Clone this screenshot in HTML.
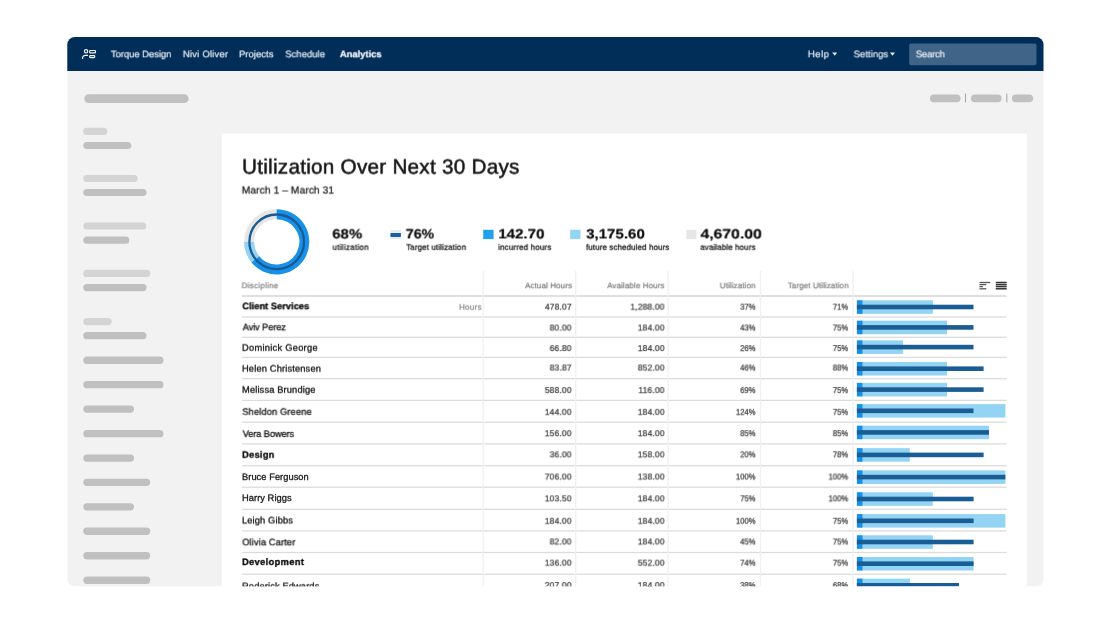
<!DOCTYPE html>
<html lang="en"><head><meta charset="utf-8"><title>Utilization Over Next 30 Days</title>
<style>
html,body{margin:0;padding:0;background:#fff}
body{width:1110px;height:625px;position:relative;overflow:hidden;font-family:"Liberation Sans", sans-serif}
#in{position:absolute;left:0;top:0;width:1110px;height:625px;overflow:hidden}
#in svg{position:absolute;left:0;top:0}
#cover{z-index:5}
.t{position:absolute;white-space:nowrap;line-height:1;font-family:"Liberation Sans", sans-serif;text-rendering:geometricPrecision;transform-origin:0 0}
</style></head><body>
<div id="in">
<svg width="1110" height="625" viewBox="0 0 1110 625">
<defs><clipPath id="fc"><rect x="67.3" y="37.1" width="976.20" height="549.30" rx="7.5"/></clipPath></defs>
<g clip-path="url(#fc)">
<rect x="60.00" y="30.00" width="1000.00" height="570.00" fill="#f2f2f2"/>
<rect x="60.00" y="30.00" width="1000.00" height="41.00" fill="#002e59"/>
<rect x="909.20" y="43.50" width="127.30" height="21.70" fill="#406487" rx="2"/>
<path d="M832.2 52.5h5.0l-2.5 3.2z" fill="#e3e9f0"/>
<path d="M890.0 52.5h5.0l-2.5 3.2z" fill="#e3e9f0"/>
<g fill="none" stroke="#f4f6f9" stroke-width="1.15"><circle cx="86.05" cy="51.35" r="1.65"/><path d="M82.55 59.1 v-1.1 a2.7 2.7 0 0 1 2.7 -2.7 h2.75"/><rect x="89.65" y="50.45" width="5.85" height="2.4" rx="0.7"/><rect x="89.65" y="55.6" width="5.1" height="1.95" rx="0.7"/></g>
<rect x="84.30" y="94.20" width="104.30" height="8.80" fill="#c0c0c0" rx="4.4"/>
<rect x="83.30" y="127.80" width="24.00" height="7.20" fill="#d4d4d4" rx="3.6"/>
<rect x="83.30" y="141.90" width="48.00" height="7.20" fill="#c0c0c0" rx="3.6"/>
<rect x="83.30" y="174.90" width="54.30" height="7.20" fill="#d4d4d4" rx="3.6"/>
<rect x="83.30" y="188.90" width="63.20" height="7.20" fill="#c0c0c0" rx="3.6"/>
<rect x="83.30" y="222.40" width="63.00" height="7.20" fill="#d4d4d4" rx="3.6"/>
<rect x="83.30" y="236.60" width="46.00" height="7.20" fill="#c0c0c0" rx="3.6"/>
<rect x="83.30" y="269.80" width="67.00" height="7.20" fill="#d4d4d4" rx="3.6"/>
<rect x="83.30" y="284.00" width="63.20" height="7.20" fill="#c0c0c0" rx="3.6"/>
<rect x="83.30" y="318.00" width="28.40" height="7.20" fill="#d4d4d4" rx="3.6"/>
<rect x="83.30" y="332.10" width="63.20" height="7.20" fill="#c0c0c0" rx="3.6"/>
<rect x="83.30" y="356.60" width="80.20" height="7.30" fill="#c0c0c0" rx="3.65"/>
<rect x="83.30" y="381.00" width="80.20" height="7.30" fill="#c0c0c0" rx="3.65"/>
<rect x="83.30" y="405.40" width="50.70" height="7.30" fill="#c0c0c0" rx="3.65"/>
<rect x="83.30" y="430.00" width="80.20" height="7.30" fill="#c0c0c0" rx="3.65"/>
<rect x="83.30" y="454.40" width="50.70" height="7.30" fill="#c0c0c0" rx="3.65"/>
<rect x="83.30" y="478.70" width="66.90" height="7.30" fill="#c0c0c0" rx="3.65"/>
<rect x="83.30" y="503.20" width="50.70" height="7.30" fill="#c0c0c0" rx="3.65"/>
<rect x="83.30" y="527.60" width="66.90" height="7.30" fill="#c0c0c0" rx="3.65"/>
<rect x="83.30" y="552.10" width="66.90" height="7.30" fill="#c0c0c0" rx="3.65"/>
<rect x="83.30" y="576.60" width="66.90" height="7.30" fill="#c0c0c0" rx="3.65"/>
<rect x="930.00" y="94.60" width="30.50" height="7.60" fill="#c0c0c0" rx="3.8"/>
<rect x="971.00" y="94.60" width="30.60" height="7.60" fill="#c0c0c0" rx="3.8"/>
<rect x="1011.90" y="94.60" width="21.20" height="7.60" fill="#c0c0c0" rx="3.8"/>
<rect x="965.00" y="93.60" width="1.00" height="8.80" fill="#a4a4a4"/>
<rect x="1006.30" y="93.60" width="1.00" height="8.80" fill="#a4a4a4"/>
<rect x="221.75" y="133.60" width="805.25" height="460.00" fill="#ffffff"/>
<path d="M249.10 241.80A27.6 27.6 0 0 1 276.70 214.20" fill="none" stroke="#e6e6e6" stroke-width="10.0"/>
<path d="M255.37 259.32A27.6 27.6 0 0 1 249.10 241.80" fill="none" stroke="#93d3f3" stroke-width="10.0"/>
<path d="M276.70 214.20A27.6 27.6 0 1 1 255.37 259.32" fill="none" stroke="#1791e8" stroke-width="10.0"/>
<circle cx="276.7" cy="241.8" r="27.3" fill="none" stroke="#185a91" stroke-width="2.3"/>
<rect x="390.40" y="229.90" width="10.55" height="9.10" fill="#ebebeb"/>
<rect x="390.40" y="233.00" width="10.55" height="3.95" fill="#1960a0" rx="0.8"/>
<rect x="483.20" y="229.80" width="10.40" height="9.30" fill="#22a0ec"/>
<rect x="570.20" y="229.80" width="10.30" height="9.30" fill="#93d3f3"/>
<rect x="686.30" y="229.80" width="10.20" height="9.30" fill="#e6e6e6"/>
<rect x="242.00" y="294.90" width="764.60" height="2.20" fill="#e0e0e0"/>
<rect x="242.00" y="316.35" width="764.60" height="1.30" fill="#dcdcdc"/>
<rect x="242.00" y="336.65" width="764.60" height="1.30" fill="#dcdcdc"/>
<rect x="242.00" y="356.75" width="764.60" height="1.30" fill="#dcdcdc"/>
<rect x="242.00" y="378.05" width="764.60" height="1.30" fill="#dcdcdc"/>
<rect x="242.00" y="399.75" width="764.60" height="1.30" fill="#dcdcdc"/>
<rect x="242.00" y="421.55" width="764.60" height="1.30" fill="#dcdcdc"/>
<rect x="242.00" y="443.25" width="764.60" height="1.30" fill="#dcdcdc"/>
<rect x="242.00" y="465.05" width="764.60" height="1.30" fill="#dcdcdc"/>
<rect x="242.00" y="486.55" width="764.60" height="1.30" fill="#dcdcdc"/>
<rect x="242.00" y="508.65" width="764.60" height="1.30" fill="#dcdcdc"/>
<rect x="242.00" y="530.25" width="764.60" height="1.30" fill="#dcdcdc"/>
<rect x="242.00" y="551.85" width="764.60" height="1.30" fill="#dcdcdc"/>
<rect x="242.00" y="573.55" width="764.60" height="1.30" fill="#dcdcdc"/>
<rect x="482.55" y="271.00" width="1.30" height="330.00" fill="#f0f0f0"/>
<rect x="575.05" y="271.00" width="1.30" height="330.00" fill="#f0f0f0"/>
<rect x="667.45" y="271.00" width="1.30" height="330.00" fill="#f0f0f0"/>
<rect x="759.85" y="271.00" width="1.30" height="330.00" fill="#f0f0f0"/>
<rect x="852.40" y="271.00" width="1.30" height="330.00" fill="#f0f0f0"/>
<rect x="979.50" y="281.85" width="10.70" height="1.30" fill="#5a5a5a"/>
<rect x="979.50" y="283.95" width="6.80" height="1.30" fill="#5a5a5a"/>
<rect x="979.50" y="285.95" width="3.40" height="1.30" fill="#5a5a5a"/>
<rect x="979.50" y="288.15" width="6.80" height="1.30" fill="#5a5a5a"/>
<rect x="995.80" y="281.75" width="10.90" height="1.50" fill="#333"/>
<rect x="995.80" y="283.85" width="10.90" height="1.50" fill="#333"/>
<rect x="995.80" y="285.85" width="10.90" height="1.50" fill="#333"/>
<rect x="995.80" y="288.05" width="10.90" height="1.50" fill="#333"/>
<rect x="856.90" y="300.30" width="76.00" height="13.50" fill="#93d3f3"/>
<rect x="856.90" y="300.30" width="5.60" height="13.50" fill="#1791e8"/>
<rect x="856.90" y="304.70" width="116.60" height="4.60" fill="#1a5c94"/>
<rect x="856.90" y="320.70" width="90.10" height="13.50" fill="#93d3f3"/>
<rect x="856.90" y="320.70" width="5.60" height="13.50" fill="#1791e8"/>
<rect x="856.90" y="325.10" width="116.60" height="4.60" fill="#1a5c94"/>
<rect x="856.90" y="340.40" width="46.00" height="13.50" fill="#93d3f3"/>
<rect x="856.90" y="340.40" width="5.60" height="13.50" fill="#1791e8"/>
<rect x="856.90" y="344.80" width="116.60" height="4.60" fill="#1a5c94"/>
<rect x="856.90" y="362.00" width="90.10" height="13.50" fill="#93d3f3"/>
<rect x="856.90" y="362.00" width="5.60" height="13.50" fill="#1791e8"/>
<rect x="856.90" y="366.40" width="126.70" height="4.60" fill="#1a5c94"/>
<rect x="856.90" y="382.90" width="90.10" height="13.50" fill="#93d3f3"/>
<rect x="856.90" y="382.90" width="5.60" height="13.50" fill="#1791e8"/>
<rect x="856.90" y="387.30" width="126.70" height="4.60" fill="#1a5c94"/>
<rect x="856.90" y="404.10" width="148.50" height="13.50" fill="#93d3f3"/>
<rect x="856.90" y="404.10" width="5.60" height="13.50" fill="#1791e8"/>
<rect x="856.90" y="408.50" width="116.60" height="4.60" fill="#1a5c94"/>
<rect x="856.90" y="425.70" width="132.10" height="13.50" fill="#93d3f3"/>
<rect x="856.90" y="425.70" width="5.60" height="13.50" fill="#1791e8"/>
<rect x="856.90" y="430.10" width="132.10" height="4.60" fill="#1a5c94"/>
<rect x="856.90" y="448.20" width="52.90" height="13.50" fill="#93d3f3"/>
<rect x="856.90" y="448.20" width="5.60" height="13.50" fill="#1791e8"/>
<rect x="856.90" y="452.60" width="126.70" height="4.60" fill="#1a5c94"/>
<rect x="856.90" y="470.40" width="148.50" height="13.50" fill="#93d3f3"/>
<rect x="856.90" y="470.40" width="5.60" height="13.50" fill="#1791e8"/>
<rect x="856.90" y="474.80" width="148.50" height="4.60" fill="#1a5c94"/>
<rect x="856.90" y="492.30" width="75.90" height="13.50" fill="#93d3f3"/>
<rect x="856.90" y="492.30" width="5.60" height="13.50" fill="#1791e8"/>
<rect x="856.90" y="496.70" width="116.70" height="4.60" fill="#1a5c94"/>
<rect x="856.90" y="514.10" width="148.50" height="13.50" fill="#93d3f3"/>
<rect x="856.90" y="514.10" width="5.60" height="13.50" fill="#1791e8"/>
<rect x="856.90" y="518.50" width="116.70" height="4.60" fill="#1a5c94"/>
<rect x="856.90" y="535.30" width="75.90" height="13.50" fill="#93d3f3"/>
<rect x="856.90" y="535.30" width="5.60" height="13.50" fill="#1791e8"/>
<rect x="856.90" y="539.70" width="116.70" height="4.60" fill="#1a5c94"/>
<rect x="856.90" y="557.00" width="116.70" height="13.50" fill="#93d3f3"/>
<rect x="856.90" y="557.00" width="5.60" height="13.50" fill="#1791e8"/>
<rect x="856.90" y="561.40" width="116.70" height="4.60" fill="#1a5c94"/>
<rect x="856.90" y="578.60" width="53.00" height="13.50" fill="#93d3f3"/>
<rect x="856.90" y="578.60" width="5.60" height="13.50" fill="#1791e8"/>
<rect x="856.90" y="583.00" width="102.10" height="4.60" fill="#1a5c94"/>
</g>
</svg>
<nav>
<span class="t" style="left:110px;top:50px;font-size:9.5px;letter-spacing:-0.053px;-webkit-text-stroke:0.2px #e8edf3;color:#e8edf3;transform:translate(0.79px,0.30px) rotateX(0.01deg)">Torque Design</span>
<span class="t" style="left:182px;top:50px;font-size:9.5px;letter-spacing:0.186px;-webkit-text-stroke:0.2px #e8edf3;color:#e8edf3;transform:translate(0.82px,0.30px) rotateX(0.01deg)">Nivi Oliver</span>
<span class="t" style="left:239px;top:50px;font-size:9.5px;letter-spacing:0.013px;-webkit-text-stroke:0.2px #e8edf3;color:#e8edf3;transform:translate(0.02px,0.30px) rotateX(0.01deg)">Projects</span>
<span class="t" style="left:285px;top:50px;font-size:9.5px;letter-spacing:0.018px;-webkit-text-stroke:0.2px #e8edf3;color:#e8edf3;transform:translate(0.27px,0.30px) rotateX(0.01deg)">Schedule</span>
<span class="t" style="left:339px;top:50px;font-size:9.5px;font-weight:700;letter-spacing:-0.053px;-webkit-text-stroke:0.2px #ffffff;color:#ffffff;transform:translate(0.76px,0.30px) rotateX(0.01deg)">Analytics</span>
<span class="t" style="left:807px;top:50px;font-size:9.5px;letter-spacing:0.510px;-webkit-text-stroke:0.2px #e8edf3;color:#e8edf3;transform:translate(0.82px,0.30px) rotateX(0.01deg)">Help</span>
<span class="t" style="left:853px;top:50px;font-size:9.5px;letter-spacing:0.035px;-webkit-text-stroke:0.2px #e8edf3;color:#e8edf3;transform:translate(0.57px,0.30px) rotateX(0.01deg)">Settings</span>
<span class="t" style="left:915px;top:50px;font-size:9.5px;letter-spacing:-0.232px;-webkit-text-stroke:0.2px #e6ecf3;color:#e6ecf3;transform:translate(0.77px,0.30px) rotateX(0.01deg)">Search</span>
</nav>
<main>
<header>
<span class="t" style="left:242px;top:157px;font-size:20.6px;letter-spacing:0.299px;-webkit-text-stroke:0.5px #141414;color:#141414;transform:translate(0.01px,0.60px) rotateX(0.01deg)">Utilization Over Next 30 Days</span>
<span class="t" style="left:241px;top:186px;font-size:10.2px;letter-spacing:0.097px;-webkit-text-stroke:0.25px #1c1c1c;color:#1c1c1c;transform:translate(0.76px,0.45px) rotateX(0.01deg)">March 1 – March 31</span>
</header>
<section id="summary">
<span class="t" style="left:332px;top:227px;font-size:13.4px;font-weight:700;-webkit-text-stroke:0.2px #0a0a0a;color:#0a0a0a;transform:translate(0.36px,0.40px) rotateX(0.01deg) scaleX(1.1090)">68%</span>
<span class="t" style="left:332px;top:243px;font-size:7.9px;letter-spacing:0.332px;-webkit-text-stroke:0.3px #1a1a1a;color:#1a1a1a;transform:translate(0.49px,0.80px) rotateX(0.01deg)">utilization</span>
<span class="t" style="left:405px;top:227px;font-size:13.4px;font-weight:700;-webkit-text-stroke:0.2px #0a0a0a;color:#0a0a0a;transform:translate(0.79px,0.40px) rotateX(0.01deg) scaleX(1.0586)">76%</span>
<span class="t" style="left:406px;top:243px;font-size:7.9px;letter-spacing:0.162px;-webkit-text-stroke:0.3px #1a1a1a;color:#1a1a1a;transform:translate(0.22px,0.80px) rotateX(0.01deg)">Target utilization</span>
<span class="t" style="left:498px;top:227px;font-size:13.4px;font-weight:700;-webkit-text-stroke:0.2px #0a0a0a;color:#0a0a0a;transform:translate(0.25px,0.40px) rotateX(0.01deg) scaleX(1.1295)">142.70</span>
<span class="t" style="left:498px;top:243px;font-size:7.9px;letter-spacing:0.205px;-webkit-text-stroke:0.3px #1a1a1a;color:#1a1a1a;transform:translate(0.17px,0.80px) rotateX(0.01deg)">incurred hours</span>
<span class="t" style="left:586px;top:227px;font-size:13.4px;font-weight:700;-webkit-text-stroke:0.2px #0a0a0a;color:#0a0a0a;transform:translate(0.05px,0.40px) rotateX(0.01deg) scaleX(1.1274)">3,175.60</span>
<span class="t" style="left:586px;top:243px;font-size:7.9px;letter-spacing:0.139px;-webkit-text-stroke:0.3px #1a1a1a;color:#1a1a1a;transform:translate(0.09px,0.80px) rotateX(0.01deg)">future scheduled hours</span>
<span class="t" style="left:700px;top:227px;font-size:13.4px;font-weight:700;-webkit-text-stroke:0.2px #0a0a0a;color:#0a0a0a;transform:translate(0.46px,0.40px) rotateX(0.01deg) scaleX(1.1777)">4,670.00</span>
<span class="t" style="left:700px;top:243px;font-size:7.9px;letter-spacing:0.146px;-webkit-text-stroke:0.3px #1a1a1a;color:#1a1a1a;transform:translate(0.36px,0.80px) rotateX(0.01deg)">available hours</span>
</section>
<section id="disciplines">
<span class="t" style="left:241px;top:282px;font-size:8.0px;letter-spacing:0.275px;-webkit-text-stroke:0.2px #7a7a7a;color:#7a7a7a;transform:translate(0.54px,0.20px) rotateX(0.01deg)">Discipline</span>
<span class="t" style="left:525px;top:282px;font-size:8.0px;letter-spacing:0.100px;-webkit-text-stroke:0.2px #7a7a7a;color:#7a7a7a;transform:translate(0.09px,0.20px) rotateX(0.01deg)">Actual Hours</span>
<span class="t" style="left:607px;top:282px;font-size:8.0px;letter-spacing:0.100px;-webkit-text-stroke:0.2px #7a7a7a;color:#7a7a7a;transform:translate(0.20px,0.20px) rotateX(0.01deg)">Available Hours</span>
<span class="t" style="left:719px;top:282px;font-size:8.0px;letter-spacing:0.100px;-webkit-text-stroke:0.2px #7a7a7a;color:#7a7a7a;transform:translate(0.73px,0.20px) rotateX(0.01deg)">Utilization</span>
<span class="t" style="left:787px;top:282px;font-size:8.0px;letter-spacing:0.100px;-webkit-text-stroke:0.2px #7a7a7a;color:#7a7a7a;transform:translate(0.68px,0.20px) rotateX(0.01deg)">Target Utilization</span>
<span class="t" style="left:459px;top:303px;font-size:8.2px;letter-spacing:0.181px;-webkit-text-stroke:0.2px #8a8a8a;color:#8a8a8a;transform:translate(0.03px,0.80px) rotateX(0.01deg)">Hours</span>
<span class="t" style="left:242px;top:302px;font-size:9.3px;font-weight:700;letter-spacing:0.021px;-webkit-text-stroke:0.3px #050505;color:#050505;transform:translate(0.32px,0.20px) rotateX(0.01deg)">Client Services</span>
<span class="t" style="left:544px;top:302px;font-size:8.4px;letter-spacing:0.200px;-webkit-text-stroke:0.25px #3a3a3a;color:#3a3a3a;transform:translate(0.90px,0.60px) rotateX(0.01deg)">478.07</span>
<span class="t" style="left:630px;top:302px;font-size:8.4px;letter-spacing:0.200px;-webkit-text-stroke:0.25px #3a3a3a;color:#3a3a3a;transform:translate(0.42px,0.60px) rotateX(0.01deg)">1,288.00</span>
<span class="t" style="left:740px;top:302px;font-size:8.4px;letter-spacing:0.050px;-webkit-text-stroke:0.25px #3c3c3c;color:#3c3c3c;transform:translate(0.12px,0.60px) rotateX(0.01deg) scaleX(0.9100)">37%</span>
<span class="t" style="left:832px;top:302px;font-size:8.4px;letter-spacing:0.050px;-webkit-text-stroke:0.25px #3c3c3c;color:#3c3c3c;transform:translate(0.72px,0.60px) rotateX(0.01deg) scaleX(0.9100)">71%</span>
<span class="t" style="left:242px;top:323px;font-size:9.3px;letter-spacing:-0.132px;-webkit-text-stroke:0.3px #161616;color:#161616;transform:translate(0.68px,0.20px) rotateX(0.01deg)">Aviv Perez</span>
<span class="t" style="left:549px;top:323px;font-size:8.4px;letter-spacing:0.200px;-webkit-text-stroke:0.25px #3a3a3a;color:#3a3a3a;transform:translate(0.66px,0.45px) rotateX(0.01deg)">80.00</span>
<span class="t" style="left:637px;top:323px;font-size:8.4px;letter-spacing:0.200px;-webkit-text-stroke:0.25px #3a3a3a;color:#3a3a3a;transform:translate(0.80px,0.45px) rotateX(0.01deg)">184.00</span>
<span class="t" style="left:740px;top:323px;font-size:8.4px;letter-spacing:0.050px;-webkit-text-stroke:0.25px #3c3c3c;color:#3c3c3c;transform:translate(0.12px,0.45px) rotateX(0.01deg) scaleX(0.9100)">43%</span>
<span class="t" style="left:832px;top:323px;font-size:8.4px;letter-spacing:0.050px;-webkit-text-stroke:0.25px #3c3c3c;color:#3c3c3c;transform:translate(0.72px,0.45px) rotateX(0.01deg) scaleX(0.9100)">75%</span>
<span class="t" style="left:241px;top:343px;font-size:9.3px;letter-spacing:0.268px;-webkit-text-stroke:0.3px #161616;color:#161616;transform:translate(0.94px,0.70px) rotateX(0.01deg)">Dominick George</span>
<span class="t" style="left:549px;top:343px;font-size:8.4px;letter-spacing:0.200px;-webkit-text-stroke:0.25px #3a3a3a;color:#3a3a3a;transform:translate(0.66px,0.95px) rotateX(0.01deg)">66.80</span>
<span class="t" style="left:637px;top:343px;font-size:8.4px;letter-spacing:0.200px;-webkit-text-stroke:0.25px #3a3a3a;color:#3a3a3a;transform:translate(0.80px,0.95px) rotateX(0.01deg)">184.00</span>
<span class="t" style="left:740px;top:343px;font-size:8.4px;letter-spacing:0.050px;-webkit-text-stroke:0.25px #3c3c3c;color:#3c3c3c;transform:translate(0.12px,0.95px) rotateX(0.01deg) scaleX(0.9100)">26%</span>
<span class="t" style="left:832px;top:343px;font-size:8.4px;letter-spacing:0.050px;-webkit-text-stroke:0.25px #3c3c3c;color:#3c3c3c;transform:translate(0.72px,0.95px) rotateX(0.01deg) scaleX(0.9100)">75%</span>
<span class="t" style="left:241px;top:364px;font-size:9.3px;letter-spacing:0.149px;-webkit-text-stroke:0.3px #161616;color:#161616;transform:translate(0.94px,0.60px) rotateX(0.01deg)">Helen Christensen</span>
<span class="t" style="left:549px;top:363px;font-size:8.4px;letter-spacing:0.200px;-webkit-text-stroke:0.25px #3a3a3a;color:#3a3a3a;transform:translate(0.75px,0.50px) rotateX(0.01deg)">83.87</span>
<span class="t" style="left:637px;top:363px;font-size:8.4px;letter-spacing:0.200px;-webkit-text-stroke:0.25px #3a3a3a;color:#3a3a3a;transform:translate(0.80px,0.50px) rotateX(0.01deg)">852.00</span>
<span class="t" style="left:740px;top:363px;font-size:8.4px;letter-spacing:0.050px;-webkit-text-stroke:0.25px #3c3c3c;color:#3c3c3c;transform:translate(0.12px,0.50px) rotateX(0.01deg) scaleX(0.9100)">46%</span>
<span class="t" style="left:832px;top:363px;font-size:8.4px;letter-spacing:0.050px;-webkit-text-stroke:0.25px #3c3c3c;color:#3c3c3c;transform:translate(0.72px,0.50px) rotateX(0.01deg) scaleX(0.9100)">88%</span>
<span class="t" style="left:241px;top:385px;font-size:9.3px;letter-spacing:0.138px;-webkit-text-stroke:0.3px #161616;color:#161616;transform:translate(0.94px,0.70px) rotateX(0.01deg)">Melissa Brundige</span>
<span class="t" style="left:544px;top:385px;font-size:8.4px;letter-spacing:0.200px;-webkit-text-stroke:0.25px #3a3a3a;color:#3a3a3a;transform:translate(0.80px,0.90px) rotateX(0.01deg)">588.00</span>
<span class="t" style="left:638px;top:385px;font-size:8.4px;letter-spacing:0.200px;-webkit-text-stroke:0.25px #3a3a3a;color:#3a3a3a;transform:translate(0.43px,0.90px) rotateX(0.01deg)">116.00</span>
<span class="t" style="left:740px;top:385px;font-size:8.4px;letter-spacing:0.050px;-webkit-text-stroke:0.25px #3c3c3c;color:#3c3c3c;transform:translate(0.12px,0.90px) rotateX(0.01deg) scaleX(0.9100)">69%</span>
<span class="t" style="left:832px;top:385px;font-size:8.4px;letter-spacing:0.050px;-webkit-text-stroke:0.25px #3c3c3c;color:#3c3c3c;transform:translate(0.72px,0.90px) rotateX(0.01deg) scaleX(0.9100)">75%</span>
<span class="t" style="left:242px;top:407px;font-size:9.3px;letter-spacing:0.132px;-webkit-text-stroke:0.3px #161616;color:#161616;transform:translate(0.28px,0.80px) rotateX(0.01deg)">Sheldon Greene</span>
<span class="t" style="left:544px;top:407px;font-size:8.4px;letter-spacing:0.200px;-webkit-text-stroke:0.25px #3a3a3a;color:#3a3a3a;transform:translate(0.80px,0.80px) rotateX(0.01deg)">144.00</span>
<span class="t" style="left:637px;top:407px;font-size:8.4px;letter-spacing:0.200px;-webkit-text-stroke:0.25px #3a3a3a;color:#3a3a3a;transform:translate(0.80px,0.80px) rotateX(0.01deg)">184.00</span>
<span class="t" style="left:735px;top:407px;font-size:8.4px;letter-spacing:0.050px;-webkit-text-stroke:0.25px #3c3c3c;color:#3c3c3c;transform:translate(0.84px,0.80px) rotateX(0.01deg) scaleX(0.9100)">124%</span>
<span class="t" style="left:832px;top:407px;font-size:8.4px;letter-spacing:0.050px;-webkit-text-stroke:0.25px #3c3c3c;color:#3c3c3c;transform:translate(0.72px,0.80px) rotateX(0.01deg) scaleX(0.9100)">75%</span>
<span class="t" style="left:242px;top:429px;font-size:9.3px;letter-spacing:-0.124px;-webkit-text-stroke:0.3px #161616;color:#161616;transform:translate(0.66px,0.90px) rotateX(0.01deg)">Vera Bowers</span>
<span class="t" style="left:544px;top:429px;font-size:8.4px;letter-spacing:0.200px;-webkit-text-stroke:0.25px #3a3a3a;color:#3a3a3a;transform:translate(0.80px,0.10px) rotateX(0.01deg)">156.00</span>
<span class="t" style="left:637px;top:429px;font-size:8.4px;letter-spacing:0.200px;-webkit-text-stroke:0.25px #3a3a3a;color:#3a3a3a;transform:translate(0.80px,0.10px) rotateX(0.01deg)">184.00</span>
<span class="t" style="left:740px;top:429px;font-size:8.4px;letter-spacing:0.050px;-webkit-text-stroke:0.25px #3c3c3c;color:#3c3c3c;transform:translate(0.12px,0.10px) rotateX(0.01deg) scaleX(0.9100)">85%</span>
<span class="t" style="left:832px;top:429px;font-size:8.4px;letter-spacing:0.050px;-webkit-text-stroke:0.25px #3c3c3c;color:#3c3c3c;transform:translate(0.72px,0.10px) rotateX(0.01deg) scaleX(0.9100)">85%</span>
<span class="t" style="left:242px;top:450px;font-size:9.3px;font-weight:700;letter-spacing:0.260px;-webkit-text-stroke:0.3px #050505;color:#050505;transform:translate(0.08px,0.75px) rotateX(0.01deg)">Design</span>
<span class="t" style="left:549px;top:450px;font-size:8.4px;letter-spacing:0.200px;-webkit-text-stroke:0.25px #3a3a3a;color:#3a3a3a;transform:translate(0.66px,0.30px) rotateX(0.01deg)">36.00</span>
<span class="t" style="left:637px;top:450px;font-size:8.4px;letter-spacing:0.200px;-webkit-text-stroke:0.25px #3a3a3a;color:#3a3a3a;transform:translate(0.80px,0.30px) rotateX(0.01deg)">158.00</span>
<span class="t" style="left:740px;top:450px;font-size:8.4px;letter-spacing:0.050px;-webkit-text-stroke:0.25px #3c3c3c;color:#3c3c3c;transform:translate(0.12px,0.30px) rotateX(0.01deg) scaleX(0.9100)">20%</span>
<span class="t" style="left:832px;top:450px;font-size:8.4px;letter-spacing:0.050px;-webkit-text-stroke:0.25px #3c3c3c;color:#3c3c3c;transform:translate(0.72px,0.30px) rotateX(0.01deg) scaleX(0.9100)">78%</span>
<span class="t" style="left:241px;top:472px;font-size:9.3px;letter-spacing:0.047px;-webkit-text-stroke:0.3px #161616;color:#161616;transform:translate(0.94px,0.90px) rotateX(0.01deg)">Bruce Ferguson</span>
<span class="t" style="left:544px;top:472px;font-size:8.4px;letter-spacing:0.200px;-webkit-text-stroke:0.25px #3a3a3a;color:#3a3a3a;transform:translate(0.80px,0.50px) rotateX(0.01deg)">706.00</span>
<span class="t" style="left:637px;top:472px;font-size:8.4px;letter-spacing:0.200px;-webkit-text-stroke:0.25px #3a3a3a;color:#3a3a3a;transform:translate(0.80px,0.50px) rotateX(0.01deg)">138.00</span>
<span class="t" style="left:735px;top:472px;font-size:8.4px;letter-spacing:0.050px;-webkit-text-stroke:0.25px #3c3c3c;color:#3c3c3c;transform:translate(0.84px,0.50px) rotateX(0.01deg) scaleX(0.9100)">100%</span>
<span class="t" style="left:828px;top:472px;font-size:8.4px;letter-spacing:0.050px;-webkit-text-stroke:0.25px #3c3c3c;color:#3c3c3c;transform:translate(0.44px,0.50px) rotateX(0.01deg) scaleX(0.9100)">100%</span>
<span class="t" style="left:241px;top:493px;font-size:9.3px;letter-spacing:0.052px;-webkit-text-stroke:0.3px #161616;color:#161616;transform:translate(0.94px,0.90px) rotateX(0.01deg)">Harry Riggs</span>
<span class="t" style="left:544px;top:494px;font-size:8.4px;letter-spacing:0.200px;-webkit-text-stroke:0.25px #3a3a3a;color:#3a3a3a;transform:translate(0.80px,0.30px) rotateX(0.01deg)">103.50</span>
<span class="t" style="left:637px;top:494px;font-size:8.4px;letter-spacing:0.200px;-webkit-text-stroke:0.25px #3a3a3a;color:#3a3a3a;transform:translate(0.80px,0.30px) rotateX(0.01deg)">184.00</span>
<span class="t" style="left:740px;top:494px;font-size:8.4px;letter-spacing:0.050px;-webkit-text-stroke:0.25px #3c3c3c;color:#3c3c3c;transform:translate(0.12px,0.30px) rotateX(0.01deg) scaleX(0.9100)">75%</span>
<span class="t" style="left:828px;top:494px;font-size:8.4px;letter-spacing:0.050px;-webkit-text-stroke:0.25px #3c3c3c;color:#3c3c3c;transform:translate(0.44px,0.30px) rotateX(0.01deg) scaleX(0.9100)">100%</span>
<span class="t" style="left:241px;top:516px;font-size:9.3px;letter-spacing:0.127px;-webkit-text-stroke:0.3px #161616;color:#161616;transform:translate(0.94px,0.40px) rotateX(0.01deg)">Leigh Gibbs</span>
<span class="t" style="left:544px;top:516px;font-size:8.4px;letter-spacing:0.200px;-webkit-text-stroke:0.25px #3a3a3a;color:#3a3a3a;transform:translate(0.80px,0.70px) rotateX(0.01deg)">184.00</span>
<span class="t" style="left:637px;top:516px;font-size:8.4px;letter-spacing:0.200px;-webkit-text-stroke:0.25px #3a3a3a;color:#3a3a3a;transform:translate(0.80px,0.70px) rotateX(0.01deg)">184.00</span>
<span class="t" style="left:735px;top:516px;font-size:8.4px;letter-spacing:0.050px;-webkit-text-stroke:0.25px #3c3c3c;color:#3c3c3c;transform:translate(0.84px,0.70px) rotateX(0.01deg) scaleX(0.9100)">100%</span>
<span class="t" style="left:832px;top:516px;font-size:8.4px;letter-spacing:0.050px;-webkit-text-stroke:0.25px #3c3c3c;color:#3c3c3c;transform:translate(0.72px,0.70px) rotateX(0.01deg) scaleX(0.9100)">75%</span>
<span class="t" style="left:242px;top:538px;font-size:9.3px;letter-spacing:0.110px;-webkit-text-stroke:0.3px #161616;color:#161616;transform:translate(0.26px,0.30px) rotateX(0.01deg)">Olivia Carter</span>
<span class="t" style="left:549px;top:537px;font-size:8.4px;letter-spacing:0.200px;-webkit-text-stroke:0.25px #3a3a3a;color:#3a3a3a;transform:translate(0.66px,0.40px) rotateX(0.01deg)">82.00</span>
<span class="t" style="left:637px;top:537px;font-size:8.4px;letter-spacing:0.200px;-webkit-text-stroke:0.25px #3a3a3a;color:#3a3a3a;transform:translate(0.80px,0.40px) rotateX(0.01deg)">184.00</span>
<span class="t" style="left:740px;top:537px;font-size:8.4px;letter-spacing:0.050px;-webkit-text-stroke:0.25px #3c3c3c;color:#3c3c3c;transform:translate(0.12px,0.40px) rotateX(0.01deg) scaleX(0.9100)">45%</span>
<span class="t" style="left:832px;top:537px;font-size:8.4px;letter-spacing:0.050px;-webkit-text-stroke:0.25px #3c3c3c;color:#3c3c3c;transform:translate(0.72px,0.40px) rotateX(0.01deg) scaleX(0.9100)">75%</span>
<span class="t" style="left:242px;top:558px;font-size:9.3px;font-weight:700;letter-spacing:0.345px;-webkit-text-stroke:0.3px #050505;color:#050505;transform:translate(0.08px,0.00px) rotateX(0.01deg)">Development</span>
<span class="t" style="left:544px;top:558px;font-size:8.4px;letter-spacing:0.200px;-webkit-text-stroke:0.25px #3a3a3a;color:#3a3a3a;transform:translate(0.80px,0.60px) rotateX(0.01deg)">136.00</span>
<span class="t" style="left:637px;top:558px;font-size:8.4px;letter-spacing:0.200px;-webkit-text-stroke:0.25px #3a3a3a;color:#3a3a3a;transform:translate(0.80px,0.60px) rotateX(0.01deg)">552.00</span>
<span class="t" style="left:740px;top:558px;font-size:8.4px;letter-spacing:0.050px;-webkit-text-stroke:0.25px #3c3c3c;color:#3c3c3c;transform:translate(0.12px,0.60px) rotateX(0.01deg) scaleX(0.9100)">74%</span>
<span class="t" style="left:832px;top:558px;font-size:8.4px;letter-spacing:0.050px;-webkit-text-stroke:0.25px #3c3c3c;color:#3c3c3c;transform:translate(0.72px,0.60px) rotateX(0.01deg) scaleX(0.9100)">75%</span>
<span class="t" style="left:241px;top:582px;font-size:9.3px;letter-spacing:0.124px;-webkit-text-stroke:0.3px #161616;color:#161616;transform:translate(0.94px,0.30px) rotateX(0.01deg)">Roderick Edwards</span>
<span class="t" style="left:544px;top:581px;font-size:8.4px;letter-spacing:0.200px;-webkit-text-stroke:0.25px #3a3a3a;color:#3a3a3a;transform:translate(0.80px,0.00px) rotateX(0.01deg)">207.00</span>
<span class="t" style="left:637px;top:581px;font-size:8.4px;letter-spacing:0.200px;-webkit-text-stroke:0.25px #3a3a3a;color:#3a3a3a;transform:translate(0.80px,0.00px) rotateX(0.01deg)">184.00</span>
<span class="t" style="left:740px;top:581px;font-size:8.4px;letter-spacing:0.050px;-webkit-text-stroke:0.25px #3c3c3c;color:#3c3c3c;transform:translate(0.12px,0.00px) rotateX(0.01deg) scaleX(0.9100)">38%</span>
<span class="t" style="left:832px;top:581px;font-size:8.4px;letter-spacing:0.050px;-webkit-text-stroke:0.25px #3c3c3c;color:#3c3c3c;transform:translate(0.72px,0.00px) rotateX(0.01deg) scaleX(0.9100)">68%</span>
</section>
</main>
<svg id="cover" width="1110" height="625" viewBox="0 0 1110 625"><rect x="0" y="586.4" width="1110" height="38.60" fill="#fff"/></svg>
</div>
</body></html>
